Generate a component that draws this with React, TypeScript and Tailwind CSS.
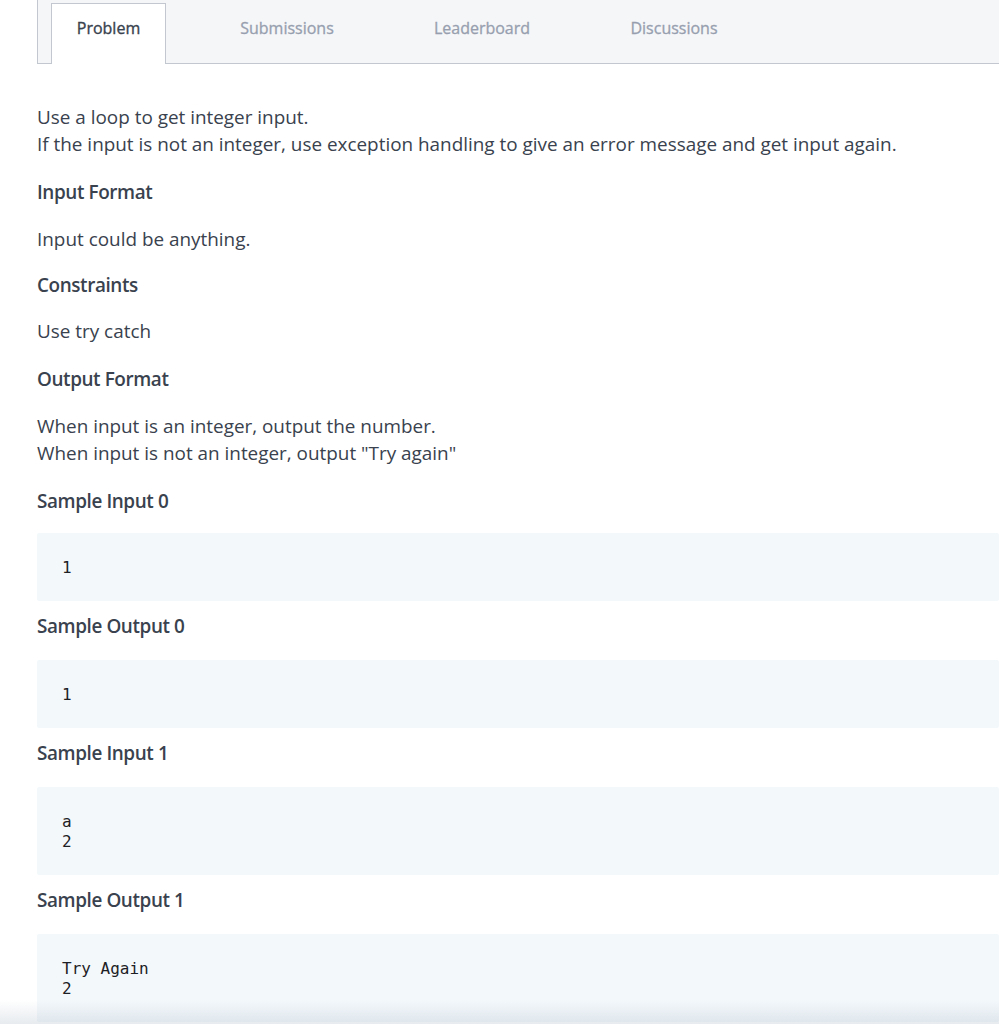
import React from "react";

const tabs = ["Problem", "Submissions", "Leaderboard", "Discussions"];

function Heading({ children }: { children: React.ReactNode }) {
  return (
    <h3 className="text-[18.9px] leading-[27px] font-semibold text-[#39424e] tracking-[-0.4px]">{children}</h3>
  );
}

function P({ children }: { children: React.ReactNode }) {
  return <p className="text-[18.9px] leading-[27px] text-[#39424e]">{children}</p>;
}

function Code({ lines }: { lines: string[] }) {
  return (
    <pre className="bg-[#f3f8fb] rounded-[2px] px-[25px] pt-[25px] pb-[23px] text-[16px] leading-[20px] text-[#1d2125] font-['DejaVu_Sans_Mono',monospace]">
      {lines.join("\n")}
    </pre>
  );
}

export default function App() {
  return (
    <div className="relative w-[999px] h-[1024px] overflow-hidden bg-white font-['Open_Sans',sans-serif]">
      <div className="ml-[37px] h-[64px] bg-[#f5f6f8] border-l border-b border-[#c2c7d0] flex items-end pl-[13px]">
        {tabs.map((t, i) => (
          <div
            key={t}
            className={
              i === 0
                ? "h-[61px] -mb-[1px] w-[115px] bg-white border border-b-0 border-[#c2c7d0] flex items-start justify-center pt-[13px] text-[16px] leading-[22px] [-webkit-text-stroke:0.35px] text-[#39424e]"
                : "h-[61px] flex items-start justify-center pt-[15px] text-[16px] leading-[22px] [-webkit-text-stroke:0.3px] text-[#979faf] " +
                  (i === 1 ? "w-[242px]" : i === 2 ? "w-[148px]" : "w-[236px]")
            }
          >
            {t}
          </div>
        ))}
      </div>
      <div className="ml-[37px] pt-[40px] flex flex-col">
        <P>
          Use a loop to get integer input.
          <br />
          If the input is not an integer, use exception handling to give an error message and get input again.
        </P>
        <div className="mt-[21px]"><Heading>Input Format</Heading></div>
        <div className="mt-[20px]"><P>Input could be anything.</P></div>
        <div className="mt-[19px]"><Heading>Constraints</Heading></div>
        <div className="mt-[19px]"><P>Use try catch</P></div>
        <div className="mt-[21px]"><Heading>Output Format</Heading></div>
        <div className="mt-[20px]">
          <P>
            When input is an integer, output the number.
            <br />
            When input is not an integer, output "Try again"
          </P>
        </div>
        <div className="mt-[21px]"><Heading>Sample Input 0</Heading></div>
        <div className="mt-[18px]"><Code lines={["1"]} /></div>
        <div className="mt-[12px]"><Heading>Sample Output 0</Heading></div>
        <div className="mt-[20px]"><Code lines={["1"]} /></div>
        <div className="mt-[12px]"><Heading>Sample Input 1</Heading></div>
        <div className="mt-[20px]"><Code lines={["a", "2"]} /></div>
        <div className="mt-[12px]"><Heading>Sample Output 1</Heading></div>
        <div className="mt-[20px]"><Code lines={["Try Again", "2"]} /></div>
      </div>
      <div className="absolute left-0 right-0 bottom-0 h-[24px] bg-gradient-to-b from-transparent to-[rgba(160,175,190,0.25)]" />
    </div>
  );
}
